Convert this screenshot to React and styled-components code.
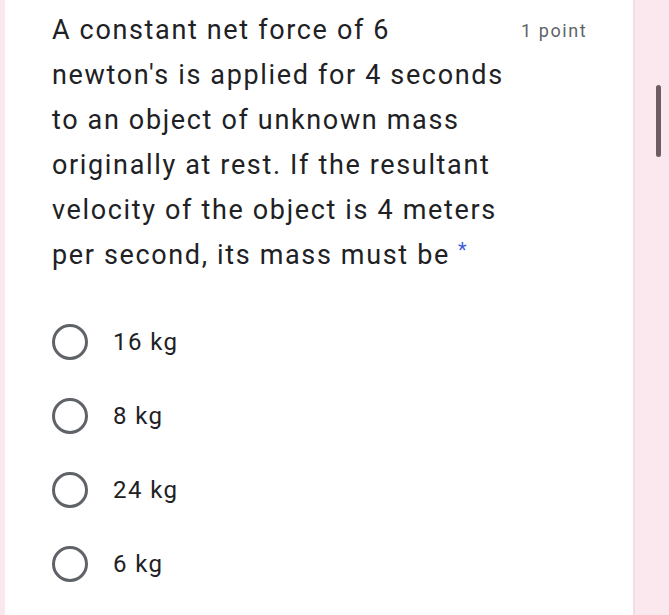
import React from "react";
import styled, { createGlobalStyle } from "styled-components";

const GlobalStyle = createGlobalStyle`
  html, body {
    margin: 0;
    padding: 0;
    background: #fbe7ee;
  }
  body {
    font-family: Roboto, "Noto Sans", Arial, sans-serif;
    color: #202124;
  }
`;

const Page = styled.div`
  display: flex;
  width: 669px;
  height: 615px;
  overflow: hidden;
`;

const Card = styled.div`
  margin-left: 5px;
  width: 630px;
  background: #ffffff;
  border-right: 2px solid #f3dde4;
  padding: 8px 0 0 47px;
  box-sizing: border-box;
`;

const TitleRow = styled.div`
  display: flex;
  align-items: flex-start;
`;

const Question = styled.div`
  width: 469px;
  font-size: 27px;
  line-height: 45px;
  letter-spacing: 1.65px;
`;

const Line = styled.span`
  display: block;
  white-space: nowrap;
`;

const Required = styled.span`
  color: #3d5ee0;
  margin-left: 8px;
  font-size: 20px;
  vertical-align: top;
  position: relative;
  top: -5px;
`;

const Points = styled.div`
  font-size: 18px;
  line-height: 45px;
  letter-spacing: 1.6px;
  color: #5f6368;
`;

const Options = styled.div`
  margin-top: 27px;
  display: flex;
  flex-direction: column;
`;

const Option = styled.label`
  display: flex;
  align-items: center;
  height: 74px;
`;

const Radio = styled.span`
  width: 36px;
  height: 36px;
  border: 3.5px solid #5f6368;
  border-radius: 50%;
  box-sizing: border-box;
  flex-shrink: 0;
`;

const OptionText = styled.span`
  margin-left: 25px;
  font-size: 24px;
  letter-spacing: 1.4px;
`;

const Gutter = styled.div`
  flex: 1;
  display: flex;
  justify-content: center;
  padding-top: 85px;
`;

const Thumb = styled.div`
  width: 5px;
  height: 72px;
  border-radius: 3px;
  background: #6b5d63;
  margin-left: 12px;
`;

const lines = [
  "A constant net force of 6",
  "newton's is applied for 4 seconds",
  "to an object of unknown mass",
  "originally at rest. If the resultant",
  "velocity of the object is 4 meters",
];

const choices = ["16 kg", "8 kg", "24 kg", "6 kg"];

export default function App() {
  return (
    <>
      <GlobalStyle />
      <Page>
        <Card>
          <TitleRow>
            <Question>
              {lines.map((l) => (
                <Line key={l}>{l}</Line>
              ))}
              <Line>
                per second, its mass must be<Required>*</Required>
              </Line>
            </Question>
            <Points>1 point</Points>
          </TitleRow>
          <Options>
            {choices.map((c) => (
              <Option key={c}>
                <Radio />
                <OptionText>{c}</OptionText>
              </Option>
            ))}
          </Options>
        </Card>
        <Gutter>
          <Thumb />
        </Gutter>
      </Page>
    </>
  );
}
